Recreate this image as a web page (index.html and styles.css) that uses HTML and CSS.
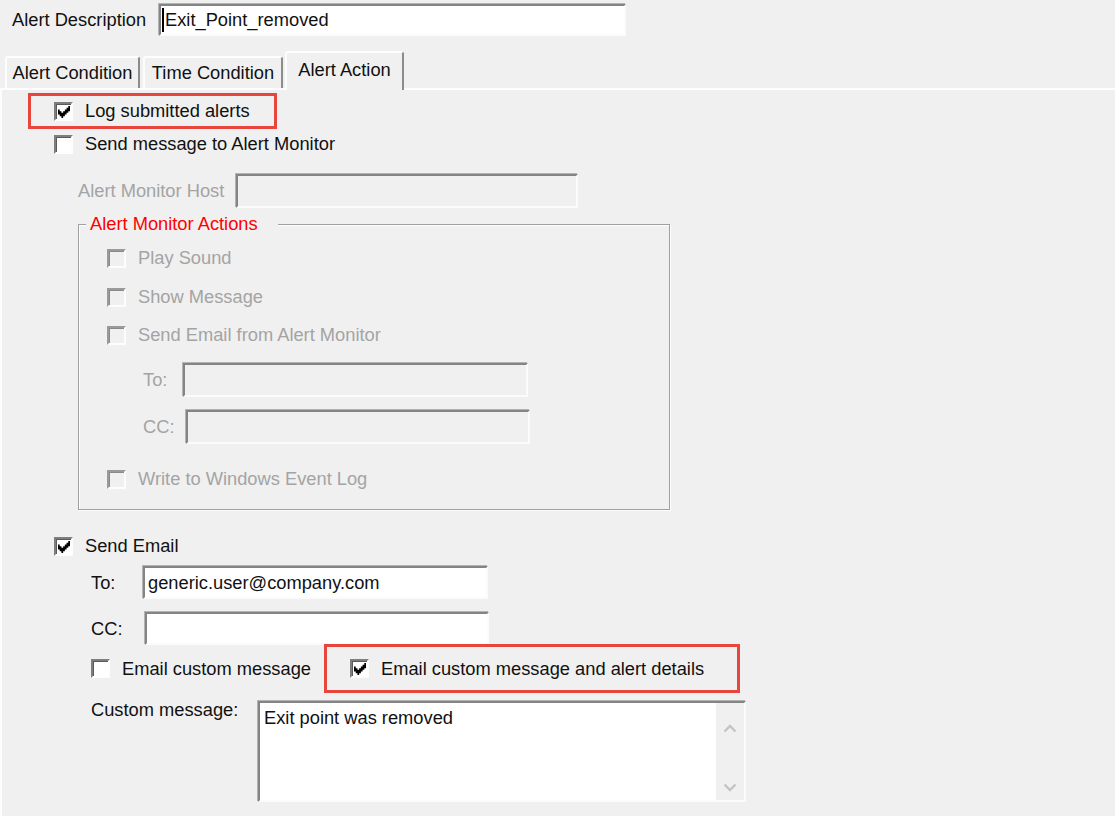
FILE: index.html
```html
<!DOCTYPE html>
<html>
<head>
<meta charset="utf-8">
<link rel="stylesheet" href="styles.css">
</head>
<body>
<div class="desc-row">
  <span class="desc-label">Alert Description</span>
  <div class="field desc-input"><span class="caret"></span><span>Exit_Point_removed</span></div>
</div>

<div class="tabstrip">
  <div class="tab tab-1">Alert Condition</div>
  <div class="tab tab-2">Time Condition</div>
  <div class="tab tab-active">Alert Action</div>
</div>

<div class="pane">
  <div class="hl hl-log">
    <span class="cb"><svg class="check" viewBox="0 0 7 7"><polygon points="0,2 0,5 1,5 1,6 2,6 2,7 3,7 3,6 4,6 4,5 5,5 5,4 6,4 6,3 7,3 7,0 6,0 6,1 5,1 5,2 4,2 4,3 3,3 3,4 2,4 2,3 1,3 1,2"/></svg></span>
    <span>Log submitted alerts</span>
  </div>

  <div class="cb-row row-send-msg">
    <span class="cb"></span>
    <span>Send message to Alert Monitor</span>
  </div>

  <div class="host-row disabled">
    <span class="host-label">Alert Monitor Host</span>
    <div class="field field-off host-input"></div>
  </div>

  <fieldset class="group">
    <legend>Alert Monitor Actions</legend>
    <div class="cb-row g-cb g-play disabled">
      <span class="cb cb-off"></span><span>Play Sound</span>
    </div>
    <div class="cb-row g-cb g-show disabled">
      <span class="cb cb-off"></span><span>Show Message</span>
    </div>
    <div class="cb-row g-cb g-mail disabled">
      <span class="cb cb-off"></span><span>Send Email from Alert Monitor</span>
    </div>
    <div class="lbl-row g-to disabled">
      <span class="g-to-label">To:</span>
      <div class="field field-off g-to-input"></div>
    </div>
    <div class="lbl-row g-cc disabled">
      <span class="g-cc-label">CC:</span>
      <div class="field field-off g-cc-input"></div>
    </div>
    <div class="cb-row g-cb g-log disabled">
      <span class="cb cb-off"></span><span>Write to Windows Event Log</span>
    </div>
  </fieldset>

  <div class="cb-row row-send-email">
    <span class="cb"><svg class="check" viewBox="0 0 7 7"><polygon points="0,2 0,5 1,5 1,6 2,6 2,7 3,7 3,6 4,6 4,5 5,5 5,4 6,4 6,3 7,3 7,0 6,0 6,1 5,1 5,2 4,2 4,3 3,3 3,4 2,4 2,3 1,3 1,2"/></svg></span>
    <span>Send Email</span>
  </div>

  <div class="lbl-row e-to">
    <span class="e-to-label">To:</span>
    <div class="field e-to-input"><span>generic.user@company.com</span></div>
  </div>
  <div class="lbl-row e-cc">
    <span class="e-cc-label">CC:</span>
    <div class="field e-cc-input"></div>
  </div>

  <div class="opt-row">
    <div class="opt-plain">
      <span class="cb"></span><span>Email custom message</span>
    </div>
    <div class="hl hl-details">
      <span class="cb"><svg class="check" viewBox="0 0 7 7"><polygon points="0,2 0,5 1,5 1,6 2,6 2,7 3,7 3,6 4,6 4,5 5,5 5,4 6,4 6,3 7,3 7,0 6,0 6,1 5,1 5,2 4,2 4,3 3,3 3,4 2,4 2,3 1,3 1,2"/></svg></span>
      <span>Email custom message and alert details</span>
    </div>
  </div>

  <div class="msg-row">
    <span class="msg-label">Custom message:</span>
    <div class="field msg-box">
      <div class="msg-text">Exit point was removed</div>
      <div class="msg-scroll">
        <svg class="chev" viewBox="0 0 14 9"><polyline points="1.5,7.5 7,2 12.5,7.5"/></svg>
        <svg class="chev" viewBox="0 0 14 9"><polyline points="1.5,1.5 7,7 12.5,1.5"/></svg>
      </div>
    </div>
  </div>
</div>
</body>
</html>
```

FILE: styles.css
```css
html, body {
  margin: 0;
  padding: 0;
}
body {
  background: #f0f0f0;
  font-family: "Liberation Sans", Arial, sans-serif;
  font-size: 18.3px;
  line-height: 20px;
  color: #111;
  width: 1115px;
  height: 816px;
  overflow: hidden;
}

/* generic sunken field */
.field {
  box-sizing: border-box;
  background: #fff;
  border: 2px solid;
  border-color: #848484 #fbfbfb #fbfbfb #848484;
  box-shadow: -1px -1px 0 #b4b4b4;
  display: flex;
  align-items: center;
}
.field-off {
  background: #f0f0f0;
}
.disabled {
  color: #a4a4a4;
}

/* checkbox */
.cb {
  box-sizing: border-box;
  width: 19px;
  height: 19px;
  flex: none;
  border: 2px solid;
  border-color: #7e7e7e #fdfdfd #fdfdfd #7e7e7e;
  box-shadow: inset 1px 1px 0 #5a5a5a;
  background: #fff;
  margin-right: 12px;
  display: flex;
  align-items: center;
  justify-content: center;
}
.cb-off {
  background: #f0f0f0;
  border-color: #9a9a9a #fdfdfd #fdfdfd #9a9a9a;
  box-shadow: inset 1px 1px 0 #8a8a8a;
}
.check {
  width: 12px;
  height: 12px;
  fill: #000;
  margin: 1px 0 0 1px;
}

.cb-row {
  display: flex;
  align-items: center;
  height: 30px;
}
.lbl-row {
  display: flex;
  align-items: center;
}

/* top description row */
.desc-row {
  display: flex;
  align-items: center;
  padding: 4px 0 4px 12px;
}
.desc-label {
  width: 147px;
}
.desc-input {
  width: 467px;
  height: 32px;
  padding-left: 1px;
}
.caret {
  width: 2px;
  height: 24px;
  background: #000;
  margin-right: 1px;
}

/* tabs */
.tabstrip {
  display: flex;
  align-items: flex-end;
  height: 48px;
  padding-left: 5px;
}
.tab {
  box-sizing: border-box;
  height: 32px;
  border: 2px solid #fdfdfd;
  border-bottom: 0;
  border-right-color: #8c8c8c;
  border-radius: 3px 3px 0 0;
  display: flex;
  align-items: center;
  justify-content: center;
  padding-bottom: 1px;
  white-space: nowrap;
}
.tab-1 {
  width: 135px;
  margin-right: 3px;
}
.tab-2 {
  width: 140px;
  margin-right: 2px;
}
.tab-active {
  width: 119px;
  height: 39px;
  margin-bottom: -2px;
  position: relative;
  z-index: 1;
  background: #f0f0f0;
  padding-bottom: 3px;
}

.pane {
  border-top: 2px solid #fdfdfd;
  border-left: 2px solid #fdfdfd;
  height: 726px;
}

/* red highlight boxes */
.hl {
  box-sizing: border-box;
  display: flex;
  align-items: center;
  border: 3px solid #e8453c;
  padding-left: 23px;
}
.hl-log {
  width: 249px;
  height: 36px;
  margin: 3px 0 0 26px;
}
.row-send-msg {
  margin-left: 52px;
}

/* alert monitor host */
.host-row {
  display: flex;
  align-items: center;
  margin: 15px 0 0 76px;
}
.host-label {
  width: 158px;
}
.host-input {
  width: 342px;
  height: 34px;
}

/* group box */
.group {
  box-sizing: border-box;
  width: 592px;
  margin: 6px 0 0 76px;
  padding: 0 0 15px 7px;
  border: 1px solid #a0a0a0;
  box-shadow: inset 1px 1px 0 #fdfdfd, 1px 1px 0 #fdfdfd;
  min-width: 0;
}
.group legend {
  color: #ff0000;
  padding: 0 20px 0 4px;
  line-height: 20px;
  background: #f0f0f0;
}
.g-cb {
  margin-left: 21px;
}
.g-play {
  margin-top: 9px;
}
.g-show {
  margin-top: 9px;
}
.g-mail {
  margin-top: 8px;
}
.g-to {
  margin: 13px 0 0 57px;
}
.g-to-label {
  width: 40px;
}
.g-to-input {
  width: 345px;
  height: 34px;
}
.g-cc {
  margin: 13px 0 0 57px;
}
.g-cc-label {
  width: 43px;
}
.g-cc-input {
  width: 344px;
  height: 34px;
}
.g-log {
  margin-top: 20px;
}

/* send email section */
.row-send-email {
  margin: 21px 0 0 52px;
}
.e-to {
  margin: 5px 0 0 89px;
}
.e-to-label {
  width: 52px;
}
.e-to-input {
  width: 345px;
  height: 33px;
  padding-left: 3px;
}
.e-cc {
  margin: 13px 0 0 89px;
}
.e-cc-label {
  width: 54px;
}
.e-cc-input {
  width: 344px;
  height: 33px;
}

.opt-row {
  display: flex;
  align-items: center;
  height: 49px;
  margin: -1px 0 0 89px;
}
.opt-plain {
  display: flex;
  align-items: center;
  width: 233px;
  white-space: nowrap;
}
.hl-details {
  width: 416px;
  height: 49px;
  white-space: nowrap;
}

.msg-row {
  display: flex;
  align-items: flex-start;
  margin: 8px 0 0 89px;
}
.msg-label {
  width: 167px;
  margin-top: -1px;
}
.msg-box {
  width: 488px;
  height: 101px;
  align-items: stretch;
}
.msg-text {
  flex: 1;
  padding: 5px 0 0 4px;
}
.msg-scroll {
  width: 28px;
  background: #f0f0f0;
  display: flex;
  flex-direction: column;
  justify-content: space-between;
  align-items: center;
  padding: 21px 0 8px;
}
.chev {
  width: 14px;
  height: 9px;
  fill: none;
  stroke: #c4c4c4;
  stroke-width: 2.4;
}
```
